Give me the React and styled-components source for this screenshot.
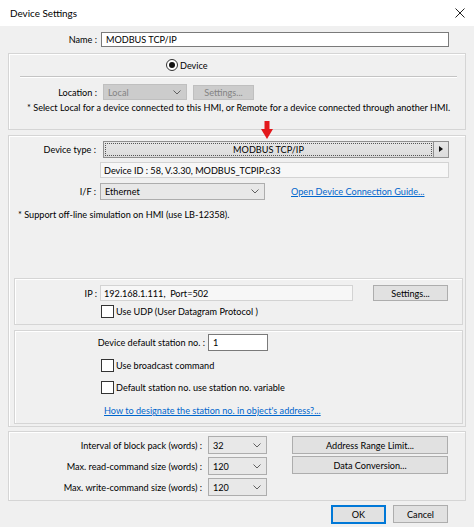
import React from 'react'
import styled, { createGlobalStyle } from 'styled-components'

const GlobalStyle = createGlobalStyle`
  html, body {
    margin: 0;
    padding: 0;
    background: #f0f0f0;
  }
  body {
    font-family: Lato, "Liberation Sans", sans-serif;
    font-size: 9.15px;
    color: #000;
  }
  * { box-sizing: border-box; }
`

const Window = styled.div`
  width: 474px;
  height: 527px;
  background: #f0f0f0;
  display: flex;
  flex-direction: column;
  overflow: hidden;
`

const TitleBar = styled.div`
  height: 26px;
  flex-shrink: 0;
  background: #fff;
  display: flex;
  align-items: center;
  justify-content: space-between;
  padding: 0 9px 0 10px;
  font-size: 9.9px;
`

const Body = styled.div`
  display: flex;
  flex-direction: column;
  padding: 5px 8px 0 8px;
`

const Row = styled.div`
  display: flex;
  align-items: center;
  height: ${p => p.h || 16}px;
  margin-top: ${p => p.mt || 0}px;
  margin-left: ${p => p.ml || 0}px;
`

const Label = styled.div`
  width: ${p => p.w}px;
  padding-right: ${p => p.pr ?? 4}px;
  text-align: right;
  white-space: nowrap;
  flex-shrink: 0;
`

const TextInput = styled.div`
  width: ${p => p.w}px;
  height: ${p => p.h || 16}px;
  background: #fff;
  border: 1px solid #7a7a7a;
  display: flex;
  align-items: center;
  padding-left: 4px;
`

const ReadOnlyBox = styled.div`
  width: ${p => p.w}px;
  height: 16px;
  background: #f7f7f7;
  border: 1px solid #d3d3d3;
  display: flex;
  align-items: center;
  padding-left: 3px;
  white-space: pre;
`

const Select = styled.div`
  width: ${p => p.w}px;
  height: ${p => p.h || 17}px;
  background: ${p => (p.disabled ? '#cccccc' : '#e8e8e8')};
  border: 1px solid ${p => (p.disabled ? '#bfbfbf' : '#adadad')};
  color: ${p => (p.disabled ? '#838383' : '#000')};
  display: flex;
  align-items: center;
  justify-content: space-between;
  padding: 0 5px 0 4px;
  flex-shrink: 0;
`

const Button = styled.div`
  width: ${p => p.w}px;
  height: ${p => p.h || 16}px;
  margin-left: ${p => p.ml || 0}px;
  background: ${p => (p.disabled ? '#cccccc' : '#e1e1e1')};
  border: 1px solid ${p => (p.primary ? '#0078d7' : p.disabled ? '#bfbfbf' : '#adadad')};
  box-shadow: ${p => (p.primary ? 'inset 0 0 0 1px #0078d7' : 'none')};
  color: ${p => (p.disabled ? '#838383' : '#000')};
  display: flex;
  align-items: center;
  justify-content: center;
  flex-shrink: 0;
`

const GroupBox = styled.div`
  position: relative;
  border: 1px solid #d5d5d5;
  box-shadow: inset 1px 1px 0 #fff;
  margin-top: ${p => p.mt || 0}px;
  margin-left: ${p => p.ml || 0}px;
  margin-right: ${p => p.mr || 0}px;
  padding-bottom: ${p => p.pb || 0}px;
  display: flex;
  flex-direction: ${p => (p.horizontal ? 'row' : 'column')};
`

const Separator = styled.div`
  height: 2px;
  border-top: 1px solid #c4c4c4;
  border-bottom: 1px solid #fff;
  margin: 5px 8px 0 11px;
`

const Note = styled.div`
  height: 12px;
  line-height: 12px;
  margin-top: ${p => p.mt || 0}px;
  padding-left: ${p => p.pl || 0}px;
  white-space: nowrap;
`

const Link = styled.span`
  color: #0066cc;
  text-decoration: underline;
  margin-left: ${p => p.ml || 0}px;
  white-space: nowrap;
`

const Radio = styled.span`
  width: 12px;
  height: 12px;
  border-radius: 50%;
  border: 1px solid #333;
  background: #fff;
  display: inline-flex;
  align-items: center;
  justify-content: center;
  margin-right: 2px;
  &::after {
    content: '';
    width: 6px;
    height: 6px;
    border-radius: 50%;
    background: #111;
  }
`

const Check = styled.span`
  width: 13px;
  height: 13px;
  border: 1px solid #333;
  background: #fff;
  margin-right: 2px;
  flex-shrink: 0;
`

const TypeButton = styled.div`
  width: 346px;
  height: 17px;
  display: flex;
  border: 1px solid #8f8f8f;
  background: linear-gradient(#e6e6e6, #dcdcdc);
`

const TypeMain = styled.div`
  flex: 1;
  margin: 1px;
  border: 1px dotted #555;
  display: flex;
  align-items: center;
  justify-content: center;
`

const TypeSide = styled.div`
  width: 15px;
  border-left: 1px solid #8f8f8f;
  display: flex;
  align-items: center;
  justify-content: center;
`

const RedArrow = styled.svg`
  position: absolute;
  top: -15px;
  left: 252px;
`

const Column = styled.div`
  display: flex;
  flex-direction: column;
  gap: ${p => p.gap || 0}px;
  margin-top: ${p => p.mt || 0}px;
  margin-left: ${p => p.ml || 0}px;
`

const Footer = styled.div`
  display: flex;
  justify-content: flex-end;
  gap: 7px;
  margin-top: 4px;
  padding-right: 18px;
`

function Chevron() {
  return (
    <svg width="8" height="5" viewBox="0 0 8 5">
      <polyline points="0.5,0.5 4,4 7.5,0.5" fill="none" stroke="#606060" strokeWidth="1" />
    </svg>
  )
}

function Combo({ w, h, value, disabled }) {
  return (
    <Select w={w} h={h} disabled={disabled}>
      <span>{value}</span>
      <Chevron />
    </Select>
  )
}

export default function App() {
  return (
    <Window>
      <GlobalStyle />
      <TitleBar>
        <span>Device Settings</span>
        <svg width="10" height="10" viewBox="0 0 10 10">
          <path d="M0.5 0.5 L9.5 9.5 M9.5 0.5 L0.5 9.5" stroke="#222" strokeWidth="1" />
        </svg>
      </TitleBar>

      <Body>
        <Row>
          <Label w={93}>Name :</Label>
          <TextInput w={348} h={15}>MODBUS TCP/IP</TextInput>
        </Row>

        <GroupBox mt={6} pb={15}>
          <Row h={12} mt={5} ml={157}>
            <Radio />
            Device
          </Row>
          <Separator />
          <Row mt={6}>
            <Label w={94} pr={6}>Location :</Label>
            <Combo w={84} h={16} value="Local" disabled />
            <Button w={61} h={15} ml={6} disabled>Settings...</Button>
          </Row>
          <Note mt={2} pl={18}>
            * Select Local for a device connected to this HMI, or Remote for a device connected through another HMI.
          </Note>
        </GroupBox>

        <GroupBox mt={5} pb={2}>
          <RedArrow width="12" height="18" viewBox="0 0 12 18">
            <rect x="3.5" y="0" width="5" height="9" fill="#e3191c" />
            <polygon points="0,8 12,8 6,18" fill="#e3191c" />
          </RedArrow>
          <Row mt={5}>
            <Label w={94} pr={7}>Device type :</Label>
            <TypeButton>
              <TypeMain>MODBUS TCP/IP</TypeMain>
              <TypeSide>
                <svg width="4" height="6" viewBox="0 0 4 6">
                  <polygon points="0,0 4,3 0,6" fill="#111" />
                </svg>
              </TypeSide>
            </TypeButton>
          </Row>
          <Row mt={5} ml={91}>
            <ReadOnlyBox w={349}>Device ID : 58, V.3.30, MODBUS_TCPIP.c33</ReadOnlyBox>
          </Row>
          <Row mt={5} h={17}>
            <Label w={91}>I/F :</Label>
            <Combo w={165} value="Ethernet" />
            <Link ml={26}>Open Device Connection Guide...</Link>
          </Row>
          <Note mt={9} pl={9}>* Support off-line simulation on HMI (use LB-12358).</Note>

          <GroupBox mt={57} ml={5} mr={2} pb={6}>
            <Row mt={6}>
              <Label w={85} pr={3}>IP :</Label>
              <ReadOnlyBox w={253}>192.168.1.111,  Port=502</ReadOnlyBox>
              <Button w={75} ml={20}>Settings...</Button>
            </Row>
            <Row mt={4} h={13} ml={86}>
              <Check />
              Use UDP (User Datagram Protocol )
            </Row>
          </GroupBox>

          <GroupBox mt={5} ml={5} mr={2} pb={6}>
            <Row mt={3} h={17}>
              <Label w={193} pr={3}>Device default station no. :</Label>
              <TextInput w={60} h={17}>1</TextInput>
            </Row>
            <Row mt={8} h={13} ml={86}>
              <Check />
              Use broadcast command
            </Row>
            <Row mt={9} h={13} ml={86}>
              <Check />
              Default station no. use station no. variable
            </Row>
            <Row mt={10} h={13} ml={89}>
              <Link>How to designate the station no. in object's address?...</Link>
            </Row>
          </GroupBox>
        </GroupBox>

        <GroupBox mt={4} pb={4} horizontal>
          <Column gap={3} mt={4}>
            <Row h={18}>
              <Label w={199} pr={6}>Interval of block pack (words) :</Label>
              <Combo w={59} h={18} value="32" />
            </Row>
            <Row h={18}>
              <Label w={199} pr={6}>Max. read-command size (words) :</Label>
              <Combo w={59} h={18} value="120" />
            </Row>
            <Row h={18}>
              <Label w={199} pr={6}>Max. write-command size (words) :</Label>
              <Combo w={59} h={18} value="120" />
            </Row>
          </Column>
          <Column gap={2} mt={4} ml={25}>
            <Button w={156} h={18}>Address Range Limit...</Button>
            <Button w={156} h={18}>Data Conversion...</Button>
          </Column>
        </GroupBox>

        <Footer>
          <Button w={55} h={19} primary>OK</Button>
          <Button w={55} h={18}>Cancel</Button>
        </Footer>
      </Body>
    </Window>
  )
}
